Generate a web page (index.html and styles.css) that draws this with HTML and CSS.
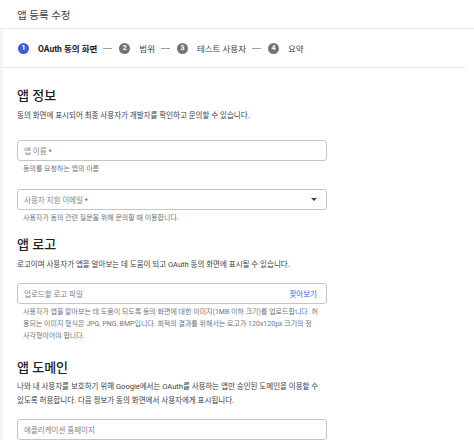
FILE: index.html
```html
<!DOCTYPE html>
<html lang="ko">
<head>
<meta charset="utf-8">
<link rel="stylesheet" href="styles.css">
</head>
<body>
<header class="topbar"><h1 class="title">앱 등록 수정</h1></header>
<div class="page">
  <div class="rail"></div>
  <main class="main">
    <nav class="stepper">
      <span class="step active"><span class="num">1</span><span class="label">OAuth 동의 화면</span></span>
      <span class="dash"></span>
      <span class="step"><span class="num">2</span><span class="label">범위</span></span>
      <span class="dash"></span>
      <span class="step"><span class="num">3</span><span class="label">테스트 사용자</span></span>
      <span class="dash"></span>
      <span class="step"><span class="num">4</span><span class="label">요약</span></span>
    </nav>
    <section class="content">
      <h2 class="heading h-info">앱 정보</h2>
      <p class="desc">동의 화면에 표시되어 최종 사용자가 개발자를 확인하고 문의할 수 있습니다.</p>

      <div class="field first">
        <div class="box"><span class="ph">앱 이름 <span class="req">*</span></span></div>
        <div class="hint">동의를 요청하는 앱의 이름</div>
      </div>

      <div class="field">
        <div class="box"><span class="ph">사용자 지원 이메일 <span class="req">*</span></span><span class="caret"></span></div>
        <div class="hint">사용자가 동의 관련 질문을 위해 문의할 때 이용합니다.</div>
      </div>

      <h2 class="heading h-logo">앱 로고</h2>
      <p class="desc">로고이며 사용자가 앱을 알아보는 데 도움이 되고 OAuth 동의 화면에 표시될 수 있습니다.</p>

      <div class="field upload">
        <div class="box"><span class="ph">업로드할 로고 파일</span><span class="link">찾아보기</span></div>
        <div class="hint">
          <span class="ln">사용자가 앱을 알아보는 데 도움이 되도록 동의 화면에 대한 이미지(1MB 이하 크기)를 업로드합니다. 허</span>
          <span class="ln">용되는 이미지 형식은 JPG, PNG, BMP입니다. 최적의 결과를 위해서는 로고가 120x120px 크기의 정</span>
          <span class="ln">사각형이어야 합니다.</span>
        </div>
      </div>

      <h2 class="heading h-domain">앱 도메인</h2>
      <p class="desc multi2">
        <span class="ln">나와 내 사용자를 보호하기 위해 Google에서는 OAuth를 사용하는 앱만 승인된 도메인을 이용할 수</span>
        <span class="ln">있도록 허용합니다. 다음 정보가 동의 화면에서 사용자에게 표시됩니다.</span>
      </p>

      <div class="field last">
        <div class="box"><span class="ph">애플리케이션 홈페이지</span></div>
      </div>
    </section>
  </main>
</div>
</body>
</html>
```

FILE: styles.css
```css
* { box-sizing: border-box; }
html, body { margin: 0; padding: 0; }
body {
  width: 474px;
  height: 441px;
  overflow: hidden;
  background: #ffffff;
  font-family: "Roboto", "Noto Sans CJK KR", sans-serif;
  color: #202124;
}
.topbar {
  height: 29px;
  border-bottom: 1px solid #e8eaed;
  padding-left: 17px;
  display: flex;
  align-items: center;
}
.title {
  margin: 0;
  font-size: 10.5px;
  font-weight: 400;
  color: #3c4043;
}
.page {
  display: flex;
}
.rail {
  width: 3px;
  background: #f1f3f4;
  flex: none;
}
.main {
  flex: 1;
}
.stepper {
  height: 39px;
  width: 463px;
  border-bottom: 1px solid #e8eaed;
  display: flex;
  align-items: center;
  padding-left: 15px;
  font-size: 8.5px;
  color: #3c4043;
}
.step {
  display: flex;
  align-items: center;
}
.num {
  width: 11px;
  height: 11px;
  border-radius: 50%;
  background: #70757a;
  color: #fff;
  font-size: 7px;
  font-weight: 700;
  display: flex;
  align-items: center;
  justify-content: center;
  margin-right: 9px;
}
.step.active .num { background: #3c5fd6; }
.step.active .label { font-weight: 700; color: #202124; }
.dash {
  width: 9px;
  height: 1px;
  background: #9aa0a6;
  margin: 0 7px 0 6px;
}
.content {
  padding-left: 14px;
}
.heading {
  margin: 0;
  font-size: 13px;
  font-weight: 500;
  line-height: 16px;
}
.h-info { padding-top: 20px; }
.h-logo { padding-top: 13px; }
.h-domain { padding-top: 18px; }
.desc {
  margin: 6px 0 0;
  font-size: 7.5px;
  line-height: 12px;
  color: #3c4043;
}
.multi2 { line-height: 14px; margin-top: 4px; }
.field {
  width: 310px;
  margin-top: 14px;
}
.field.first { margin-top: 18px; }
.field.upload { margin-top: 12px; }
.field.last { margin-top: 11px; }
.box {
  height: 21px;
  border: 1px solid #c4c7c5;
  border-radius: 3px;
  display: flex;
  align-items: center;
  justify-content: space-between;
  padding: 0 9px 0 6px;
  font-size: 7.5px;
}
.ph { color: #80868b; }
.req { color: #d93025; }
.link { color: #1a73e8; }
.caret {
  width: 0;
  height: 0;
  border-left: 3px solid transparent;
  border-right: 3px solid transparent;
  border-top: 3px solid #3c4043;
}
.hint {
  padding-left: 6px;
  margin-top: 2px;
  font-size: 7px;
  line-height: 12px;
  color: #70757a;
}
.ln { display: block; white-space: nowrap; }
```
